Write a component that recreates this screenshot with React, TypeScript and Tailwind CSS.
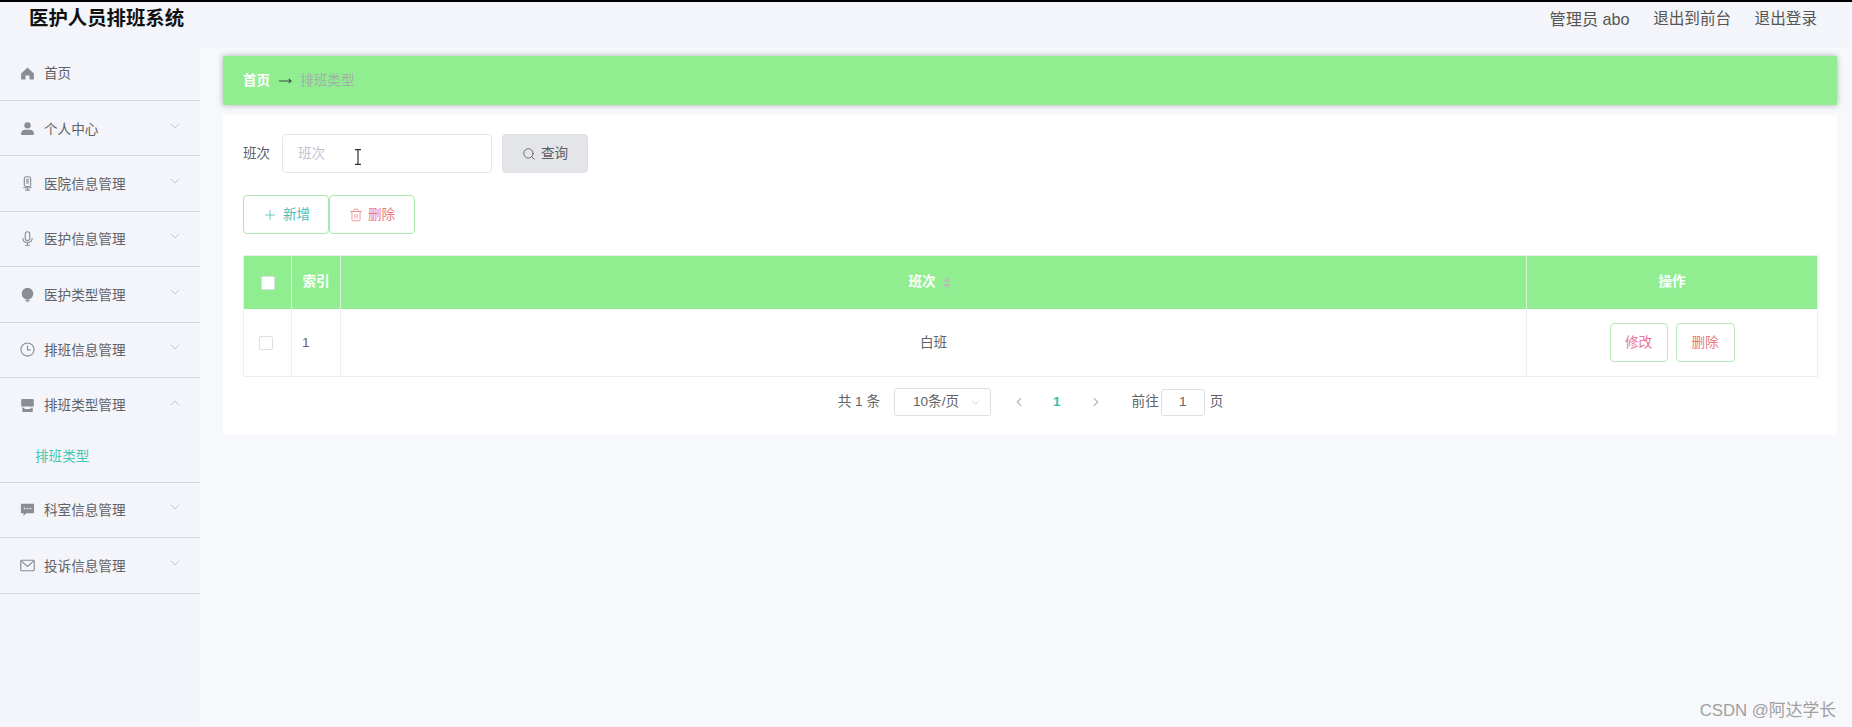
import React from 'react';
import { ChevronDown, ChevronUp, ChevronLeft, ChevronRight, Plus, Search, Trash2 } from 'lucide-react';

const font = { fontFamily: '"Liberation Sans", "Noto Sans CJK SC", sans-serif' };

// Sidebar icons (element-ui style glyphs)
const HomeIcon = () => (
  <svg viewBox="0 0 16 16" className="w-[15px] h-[15px]" fill="#8b8d94">
    <path d="M8 1.5 1.2 8v6.5h4.6V10h4.4v4.5h4.6V8z" />
  </svg>
);
const UserIcon = () => (
  <svg viewBox="0 0 16 16" className="w-[15px] h-[15px]" fill="#8b8d94">
    <circle cx="8" cy="4.6" r="3.4" />
    <path d="M1.2 15v-2.4c0-2 2-3.4 4-3.4h5.6c2 0 4 1.4 4 3.4V15z" />
  </svg>
);
const MicFillIcon = () => (
  <svg viewBox="0 0 16 16" className="w-[15px] h-[15px]" fill="none" stroke="#8b8d94" strokeWidth="1.2">
    <rect x="4.6" y="0.8" width="6.8" height="10.4" rx="2" />
    <path d="M6.5 3.5h3M6.5 5.5h3M6.5 7.5h3M3.6 11.8c1 1 7.8 1 8.8 0M8 12.5v2M5.5 15h5" />
  </svg>
);
const MicIcon = () => (
  <svg viewBox="0 0 16 16" className="w-[15px] h-[15px]" fill="none" stroke="#8b8d94" strokeWidth="1.2">
    <rect x="5.6" y="0.8" width="4.8" height="9.4" rx="2.4" />
    <path d="M3 7.5c0 3 2 4.8 5 4.8s5-1.8 5-4.8M8 12.3V15M5.5 15.2h5" />
  </svg>
);
const BallIcon = () => (
  <svg viewBox="0 0 16 16" className="w-[15px] h-[15px]" fill="#8b8d94">
    <circle cx="8" cy="7" r="6.2" />
    <path d="M6 13.5h4v2H6z" />
  </svg>
);
const ClockIcon = () => (
  <svg viewBox="0 0 16 16" className="w-[15px] h-[15px]" fill="none" stroke="#8b8d94" strokeWidth="1.2">
    <circle cx="8" cy="8" r="7" />
    <path d="M8 3.8V8.4h3.4" />
  </svg>
);
const StoreIcon = () => (
  <svg viewBox="0 0 16 16" className="w-[15px] h-[15px]" fill="#8b8d94">
    <path d="M2.5 1h11a1.2 1.2 0 0 1 1.2 1.2V9H1.3V2.200A1.200 1.200 0 0 1 2.500 1z" />
    <path d="M2.400 10h1.300c.5 1.400 1.800 1.800 4.300 1.800s3.800-.4 4.300-1.800h1.300v4a1 1 0 0 1-1 1h-9.200a1 1 0 0 1-1-1z" />
  </svg>
);
const ChatIcon = () => (
  <svg viewBox="0 0 16 16" className="w-[15px] h-[15px]" fill="#8b8d94">
    <path fillRule="evenodd" d="M1 1.800h14v10.200H6.500L3.800 15v-3H1zM4 6v1.600h1.600V6zm3.200 0v1.600h1.600V6zm3.200 0v1.600H12V6z" />
  </svg>
);
const MailIcon = () => (
  <svg viewBox="0 0 16 16" className="w-[15px] h-[15px]" fill="none" stroke="#8b8d94" strokeWidth="1.2">
    <rect x="0.8" y="2.400" width="14.400" height="11.200" rx="1" />
    <path d="M1.200 3 8 9l6.800-6" />
  </svg>
);

const menu = [
  { label: '个人中心', icon: <UserIcon /> },
  { label: '医院信息管理', icon: <MicFillIcon /> },
  { label: '医护信息管理', icon: <MicIcon /> },
  { label: '医护类型管理', icon: <BallIcon /> },
  { label: '排班信息管理', icon: <ClockIcon /> },
  { label: '排班类型管理', icon: <StoreIcon />, open: true, children: ['排班类型'] },
  { label: '科室信息管理', icon: <ChatIcon /> },
  { label: '投诉信息管理', icon: <MailIcon /> },
];

const Sidebar = () => (
  <aside className="w-[200px] shrink-0 text-[13.6px] text-[#606266]">
    <div className="h-[54px] pl-5 flex items-center gap-[8px] border-b border-[#d3d5da]">
      <HomeIcon />
      <span className="ml-[1px] mt-[2px]">首页</span>
    </div>
    {menu.map((item) => (
      <div key={item.label} className="border-b border-[#d3d5da]">
        <div className="h-[54.400px] pl-5 pr-[17px] flex items-center">
          <span className="w-[25px] flex"><span className="flex">{item.icon}</span></span>
          <span className="ml-[-1px] flex-1 mt-[3px]">{item.label}</span>
          {item.open ? (
            <ChevronUp className="w-[16px] h-[16px] text-[#b4b7bd] -mt-[5px]" strokeWidth={1.1} />
          ) : (
            <ChevronDown className="w-[16px] h-[16px] text-[#b4b7bd] -mt-[5px]" strokeWidth={1.1} />
          )}
        </div>
        {item.children?.map((c) => (
          <div key={c} className="h-[49.400px] pl-[35px] flex items-center text-[#40c9b6]">{c}</div>
        ))}
      </div>
    ))}
  </aside>
);

const GREEN_BORDER = 'border border-[#a9e8a9]';

const Toolbar = () => (
  <>
    <div className="flex items-center text-[13.6px] text-[#606266]">
      <span className="w-[39px] mt-[2px]">班次</span>
      <div className="w-[210px] h-[39px] px-[15px] pt-[2px] flex items-center border border-[#e4e6eb] rounded-[4px] bg-white text-[#c0c4cc]">班次</div>
      <button className="ml-[10px] w-[86px] h-[39px] flex items-center justify-center gap-[5px] rounded-[4px] bg-[#e3e5e9] border border-[#dcdfe4] text-[#5a5d63]">
        <Search className="w-[14px] h-[14px]" strokeWidth={1.5} />
        <span className="mt-[2px]">查询</span>
      </button>
    </div>
    <div className="flex mt-[22px] text-[13.6px]">
      <button className={`w-[86px] h-[39px] flex items-center justify-center gap-[5px] rounded-[4px] bg-white ${GREEN_BORDER} text-[#4dbdb4]`}>
        <Plus className="w-[16px] h-[16px]" strokeWidth={1.2} />
        <span className="mt-[2px]">新增</span>
      </button>
      <button className={`w-[86px] h-[39px] flex items-center justify-center gap-[5px] rounded-[4px] bg-white ${GREEN_BORDER} text-[#ec7a7f]`}>
        <Trash2 className="w-[14px] h-[14px]" strokeWidth={1.3} />
        <span className="mt-[2px]">删除</span>
      </button>
    </div>
  </>
);

const Table = () => (
  <div className="mt-[21px] border border-[#ebeef5] text-[13.6px] text-[#606266]">
    <div className="flex h-[53px] bg-[#90ee90] text-white font-bold">
      <div className="w-[48px] flex items-center justify-center border-r border-[#d5f5d5]">
        <span className="w-[14px] h-[14px] bg-white rounded-[2px] border border-[#dcdfe6]" />
      </div>
      <div className="w-[49px] flex items-center justify-center border-r border-[#d5f5d5]">索引</div>
      <div className="flex-1 flex items-center justify-center gap-[7px] pr-[8px] border-r border-[#d5f5d5]">
        班次
        <svg viewBox="0 0 8 14" className="w-[8px] h-[14px]" fill="#b3c2b8">
          <path d="M4 1 7.500 6h-7zM4 13 .5 8h7z" />
        </svg>
      </div>
      <div className="w-[290px] flex items-center justify-center">操作</div>
    </div>
    <div className="flex h-[67px]">
      <div className="w-[48px] flex items-center justify-center border-r border-[#ebeef5]">
        <span className="w-[14px] h-[14px] bg-white rounded-[2px] border border-[#dcdfe6] -ml-[3px]" />
      </div>
      <div className="w-[49px] pl-[10px] pt-[2px] flex items-center border-r border-[#ebeef5]">1</div>
      <div className="flex-1 pt-[2px] flex items-center justify-center border-r border-[#ebeef5]">白班</div>
      <div className="w-[290px] flex items-center justify-center gap-[8px]">
        <button className="w-[58px] h-[39px] pt-[2px] rounded-[4px] border border-[#b5e8b5] text-[#e8739c]">修改</button>
        <button className="w-[59px] h-[39px] pt-[2px] rounded-[4px] border border-[#b5e8b5] text-[#ec7a7f]">删除</button>
      </div>
    </div>
  </div>
);

const Pagination = () => (
  <div className="mt-[11px] h-[28px] flex items-center justify-center text-[13.6px] text-[#606266]">
    <span>共 1 条</span>
    <div className="ml-[14px] w-[97px] h-[28px] pl-[18px] pr-[8px] flex items-center justify-between border border-[#dcdfe6] rounded-[3px]">
      <span>10条/页</span>
      <ChevronDown className="w-[13px] h-[13px] text-[#c0c4cc]" strokeWidth={1.3} />
    </div>
    <ChevronLeft className="ml-[21px] w-[14px] h-[14px] text-[#b4b7bd]" strokeWidth={2} />
    <span className="ml-[27px] mr-[28px] font-bold text-[#36c2a2]">1</span>
    <ChevronRight className="w-[14px] h-[14px] text-[#b4b7bd]" strokeWidth={2} />
    <span className="ml-[29px]">前往</span>
    <div className="ml-[2px] w-[44px] h-[27px] flex items-center justify-center border border-[#dcdfe6] rounded-[3px]">1</div>
    <span className="ml-[5px]">页</span>
  </div>
);

export default function App() {
  return (
    <div className="relative w-[1852px] h-[727px] overflow-hidden bg-[#f3f5fa] border-t-2 border-black" style={font}>
      <header className="h-[45px] flex items-center justify-between pl-[29px] pr-[35px] pb-[11px]">
        <h1 className="text-[19.4px] font-bold text-[#111]">医护人员排班系统</h1>
        <div className="flex items-center gap-[23.500px] text-[15.6px] text-[#555]">
          <span className="text-[16.2px]">管理员 abo</span>
          <span>退出到前台</span>
          <span>退出登录</span>
        </div>
      </header>
      <div className="flex h-[680px]">
        <Sidebar />
        <main className="flex-1 bg-[#f7f8fb] pl-[23px] pr-[15px] pt-[9px]">
          <div className="h-[49px] pl-[20px] flex items-center bg-[#90ee90] text-[13.6px] shadow-[0_0_6px_rgba(0,0,0,0.3)]">
            <span className="font-bold text-white mt-[2px]">首页</span>
            <svg viewBox="0 0 14 8" className="ml-[9px] mr-[8px] w-[13px] h-[8px]" fill="none" stroke="#3d4a42" strokeWidth="1.1">
              <path d="M0 4h13M10.500 1.800 13 4l-2.500 2.200" />
            </svg>
            <span className="text-[#9fb2a8] mt-[2px]">排班类型</span>
          </div>
          <section className="mt-[10px] h-[320px] bg-white pt-[19px] px-[20px] pr-[19px]">
            <Toolbar />
            <Table />
            <Pagination />
          </section>
        </main>
      </div>
      {/* text cursor captured in the screenshot */}
      <svg viewBox="0 0 8 16" className="absolute left-[354px] top-[147px] w-[8px] h-[16px]" fill="none" stroke="#333" strokeWidth="1.2">
        <path d="M1 .7h6M4 .7v14.600M1 15.300h6" />
      </svg>
      <span className="absolute right-[16px] bottom-[4px] text-[16.8px] text-[#a0a0a0]">CSDN @阿达学长</span>
    </div>
  );
}
